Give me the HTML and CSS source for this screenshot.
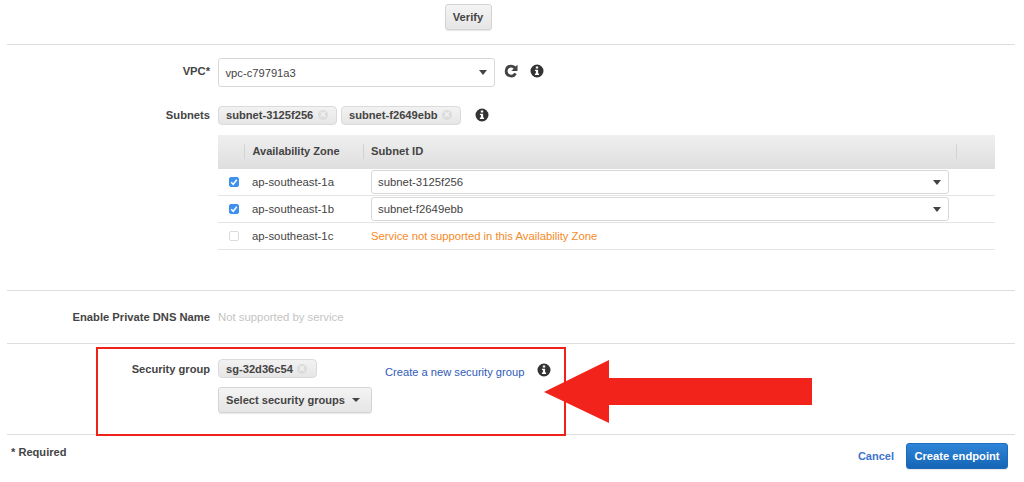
FILE: index.html
```html
<!DOCTYPE html>
<html lang="en">
<head>
<meta charset="utf-8">
<title>Create endpoint</title>
<link rel="stylesheet" href="styles.css">
</head>
<body>
<div class="page">
  <section class="verify-section">
    <button class="btn verify-btn">Verify</button>
  </section>

  <section class="network-section">
    <div class="row vpc-row">
      <label class="label">VPC*</label>
      <div class="select vpc-select"><span>vpc-c79791a3</span><i class="caret"></i></div>
      <svg class="refresh" viewBox="0 0 16 16" width="16" height="16"><path d="M14.500 1.800V8H8.300l2.300-2.300A3.700 3.700 0 0 0 8 4.600 3.500 3.500 0 1 0 11.200 9.700l2.500 1.300A6.300 6.300 0 1 1 8 1.800c1.700 0 3.300.7 4.500 1.800z" fill="#444"/></svg>
      <svg class="info vpc-info" viewBox="0 0 14 14" width="14" height="14"><use href="#info"/></svg>
    </div>
    <div class="row subnets-row">
      <label class="label">Subnets</label>
      <div class="tags">
        <span class="tag">subnet-3125f256<i class="tag-x">×</i></span>
        <span class="tag tag-wide">subnet-f2649ebb<i class="tag-x">×</i></span>
      </div>
      <svg class="info subnets-info" viewBox="0 0 14 14" width="14" height="14"><use href="#info"/></svg>
    </div>
    <table class="az-table">
      <thead>
        <tr>
          <th class="col-check"></th>
          <th class="col-az"><span>Availability Zone</span></th>
          <th class="col-subnet"><span>Subnet ID</span></th>
          <th class="col-end"></th>
        </tr>
      </thead>
      <tbody>
        <tr>
          <td class="cell-check"><span class="check on"><svg viewBox="0 0 10 10" width="10" height="10"><path d="M2.200 5.200 4.200 7.300 7.800 2.800" fill="none" stroke="#fff" stroke-width="1.500"/></svg></span></td>
          <td class="cell-az">ap-southeast-1a</td>
          <td class="cell-select" colspan="2"><div class="select subnet-select"><span>subnet-3125f256</span><i class="caret"></i></div></td>
        </tr>
        <tr>
          <td class="cell-check"><span class="check on"><svg viewBox="0 0 10 10" width="10" height="10"><path d="M2.200 5.200 4.200 7.300 7.800 2.800" fill="none" stroke="#fff" stroke-width="1.500"/></svg></span></td>
          <td class="cell-az">ap-southeast-1b</td>
          <td class="cell-select" colspan="2"><div class="select subnet-select"><span>subnet-f2649ebb</span><i class="caret"></i></div></td>
        </tr>
        <tr>
          <td class="cell-check"><span class="check"></span></td>
          <td class="cell-az">ap-southeast-1c</td>
          <td class="cell-warn" colspan="2">Service not supported in this Availability Zone</td>
        </tr>
      </tbody>
    </table>
  </section>

  <section class="dns-section">
    <div class="row">
      <label class="label">Enable Private DNS Name</label>
      <span class="muted">Not supported by service</span>
    </div>
  </section>

  <section class="sg-section">
    <label class="label sg-label">Security group</label>
    <div class="sg-controls">
      <span class="tag sg-tag">sg-32d36c54<i class="tag-x">×</i></span>
      <button class="btn sg-btn">Select security groups<i class="caret"></i></button>
    </div>
    <a class="sg-link" href="#">Create a new security group</a>
    <svg class="info sg-info" viewBox="0 0 14 14" width="14" height="14"><use href="#info"/></svg>
  </section>

  <footer class="footer">
    <span class="required">* Required</span>
    <div class="actions">
      <a class="cancel" href="#">Cancel</a>
      <button class="btn primary">Create endpoint</button>
    </div>
  </footer>
</div>

<div class="callout-box"></div>
<svg class="callout-arrow" viewBox="0 0 268 63" width="268" height="63"><path d="M0 32 65 0V18H268V45H65V63z" fill="#f1231a"/></svg>

<svg class="defs" width="0" height="0">
  <symbol id="info" viewBox="0 0 14 14">
    <path fill-rule="evenodd" d="M7 .5a6.500 6.500 0 1 1 0 13 6.500 6.500 0 0 1 0-13zM5.800 2.600v2h2.400v-2zM4.900 5.800v1.300h1v2.500h-1V11h4.200V9.600h-1V5.800z" fill="#333"/>
  </symbol>
</svg>
</body>
</html>
```
FILE: styles.css
```css
* { box-sizing: border-box; }
html, body { margin: 0; padding: 0; }
body {
  width: 1024px;
  height: 482px;
  overflow: hidden;
  position: relative;
  background: #fff;
  color: #444;
  font-family: "Liberation Sans", Arial, sans-serif;
  font-size: 11.350px;
}
.page { margin: 0 9px 0 7px; }
section { border-bottom: 1px solid #ddd; }

.btn {
  display: inline-flex;
  align-items: center;
  justify-content: center;
  margin: 0;
  padding: 0;
  font: bold 11.200px "Liberation Sans", Arial, sans-serif;
  color: #444;
  white-space: nowrap;
  background: linear-gradient(#f4f4f4, #e5e5e5);
  border: 1px solid #d4d4d4;
  border-radius: 3px;
  box-shadow: 0 1px 1px rgba(0,0,0,.1);
}
.verify-section { height: 45px; padding: 4px 0 0 437.500px; }
.verify-btn { width: 47px; height: 26px; }

.network-section { height: 246px; padding-top: 13px; }
.row { display: flex; align-items: center; }
.label {
  flex: none;
  width: 203px;
  margin-right: 8px;
  text-align: right;
  font-weight: bold;
  font-size: 11.200px;
  color: #444;
}
.select {
  display: flex;
  align-items: center;
  justify-content: space-between;
  background: #fff;
  border: 1px solid #d8d8d8;
  border-radius: 3px;
  color: #444;
}
.caret {
  display: inline-block;
  width: 0;
  height: 0;
  border-left: 4.500px solid transparent;
  border-right: 4.500px solid transparent;
  border-top: 5px solid #444;
}
.vpc-row { height: 29px; }
.vpc-row .label { align-self: flex-start; padding-top: 7px; }
.vpc-select { width: 277px; height: 29px; padding: 0 7px 0 6.500px; font-size: 11.200px; }
.refresh { margin-left: 8px; margin-top: -3px; }
.vpc-info { margin-left: 11px; margin-top: -3px; }

.subnets-row { height: 20px; margin-top: 18px; }
.tags { display: flex; gap: 4px; }
.tag {
  display: inline-flex;
  align-items: center;
  justify-content: space-between;
  width: 119px;
  height: 19px;
  padding: 0 8px 0 7px;
  background: linear-gradient(#f2f2f2, #e6e6e6);
  border: 1px solid #dadada;
  border-radius: 4px;
  font-weight: bold;
  font-size: 11.150px;
  color: #444;
  white-space: nowrap;
}
.tag-wide { width: 120px; }
.tag-x {
  display: inline-block;
  width: 10px;
  height: 10px;
  border-radius: 50%;
  background: #dcdcdc;
  color: #f4f4f4;
  font: bold 10px/10px "Liberation Sans", Arial, sans-serif;
  text-align: center;
}
.subnets-info { margin-left: 14px; }

.az-table {
  width: 777px;
  margin: 10px 0 0 211px;
  border-collapse: separate;
  border-spacing: 0;
  table-layout: fixed;
}
.az-table th {
  height: 34px;
  padding: 0 0 1px;
  text-align: left;
  font-size: 11.200px;
  font-weight: bold;
  color: #444;
  background: linear-gradient(#efefef, #dedede);
}
.az-table th span { display: block; line-height: 15px; border-left: 1px solid #d2d2d2; padding-left: 7px; }
.col-check { width: 27px; }
.col-az { width: 118px; }
.col-subnet { width: 593px; }
.az-table th.col-az span { margin-left: -1px; padding-left: 7.500px; height: 15px; font-size: 11px; }
.az-table th.col-end::before { content: ""; display: block; height: 15px; border-left: 1px solid #d2d2d2; }
.az-table td { height: 27px; padding: 0; border-bottom: 1px solid #e4e4e4; color: #444; }
.az-table .cell-check { padding-left: 10.500px; }
.az-table .cell-az { padding-left: 7px; }
.check {
  display: block;
  width: 10px;
  height: 10px;
  margin-top: -1px;
  border: 1px solid #dcdcdc;
  border-radius: 2px;
  background: #fff;
}
.check.on { background: #3d8ff0; border-color: #3d8ff0; position: relative; }
.check.on svg { position: absolute; left: -1px; top: -1px; }
.az-table .cell-select { padding-left: 8px; }
.subnet-select { width: 578px; height: 24px; padding: 0 7px 0 6px; }
.az-table .cell-warn { padding-left: 8px; color: #f58a1f; font-size: 11.250px; }

.dns-section { height: 53px; padding-top: 18px; }
.dns-section .row { height: 15px; }
.muted { color: #c4c4c4; }

.sg-section {
  display: flex;
  height: 91px;
  padding-top: 15px;
  align-items: flex-start;
}
.sg-label { padding-top: 4px; font-size: 11.100px; }
.sg-controls { display: flex; flex-direction: column; align-items: flex-start; gap: 9px; width: 167px; }
.sg-tag { width: 99px; padding-right: 9px; }
.sg-btn { width: 154px; height: 26px; gap: 6px; justify-content: flex-start; padding-left: 7px; font-size: 11.100px; }
.sg-btn .caret { border-left-width: 4px; border-right-width: 4px; border-top-width: 4px; margin-left: 1px; }
.sg-link { margin-top: 7px; color: #2f5cb8; font-size: 11.150px; text-decoration: none; white-space: nowrap; width: 152px; }
.sg-info { margin-top: 4px; }

.footer { display: flex; justify-content: space-between; align-items: flex-start; padding: 8px 0 0 4px; }
.required { font-weight: bold; font-size: 11.100px; margin-top: 3px; color: #444; }
.actions { display: flex; align-items: center; gap: 12px; margin-right: 7px; }
.cancel { color: #3b73d1; font-weight: bold; font-size: 11px; text-decoration: none; }
.primary {
  width: 102px;
  height: 26px;
  color: #fff;
  background: linear-gradient(#2f85d8, #1565b5);
  border: 1px solid #1b6abd;
}

.callout-box {
  position: absolute;
  left: 96px;
  top: 347px;
  width: 470px;
  height: 89px;
  border: 2px solid #ee2219;
  pointer-events: none;
}
.callout-arrow { position: absolute; left: 544px; top: 360px; }
.defs { position: absolute; }
```
